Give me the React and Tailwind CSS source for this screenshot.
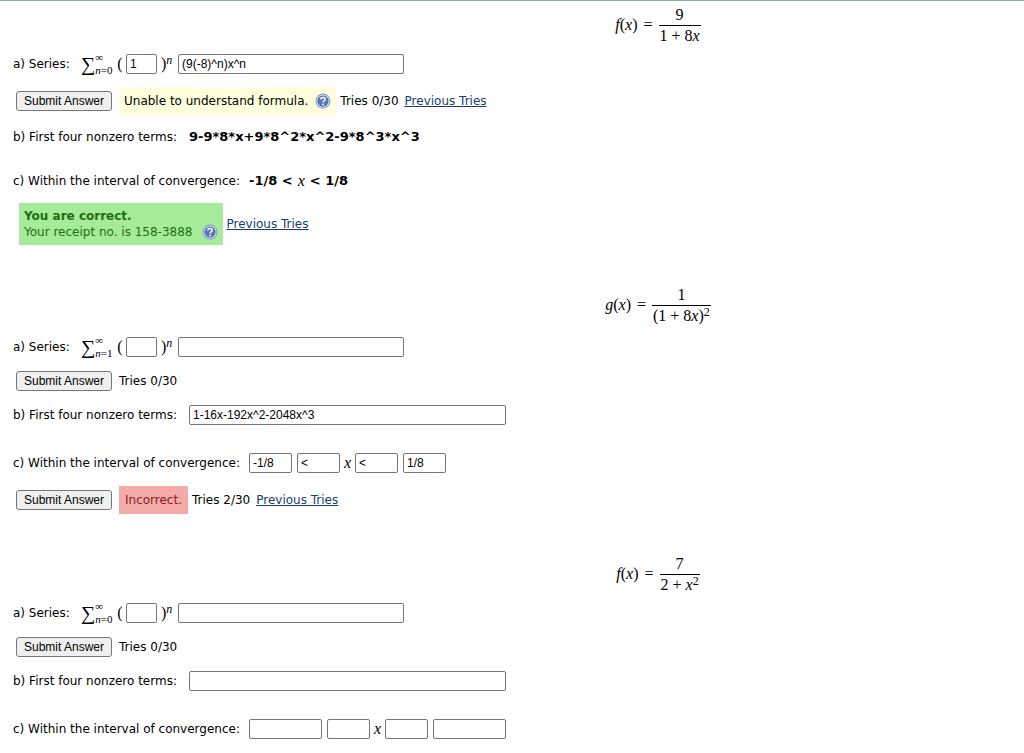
import React, { useState } from 'react';

function Field({ id, label, initial = '', width }) {
  const [value, setValue] = useState(initial);
  return (
    <input id={id} type="text" aria-label={label} value={value} onChange={(e) => setValue(e.target.value)}
      className={`${width} h-5 shrink-0 border border-[#767676] rounded-xs bg-white px-[3px] font-['Liberation_Sans',sans-serif] text-[12px] text-black`} />
  );
}

function SubmitButton() {
  return (
    <button type="button"
      className="h-5 w-24 ml-[3px] mr-[7px] shrink-0 border border-[#767676] rounded-[3px] bg-[#efefef] font-['Liberation_Sans',sans-serif] text-[12px] leading-4 text-black whitespace-nowrap">
      Submit Answer
    </button>
  );
}

function PreviousTries() {
  return <a href="#tries" className="text-[#1b3c6e] underline">Previous Tries</a>;
}

function HelpIcon() {
  return (
    <svg viewBox="0 0 16 16" className="w-4 h-4 shrink-0" role="img" aria-label="Help">
      <circle cx="8" cy="8" r="7.5" fill="#7f93bd" />
      <circle cx="8" cy="8" r="6.6" fill="#d5def0" />
      <circle cx="8" cy="8" r="5.6" fill="#5577b5" />
      <path d="M5.8 6.4C5.8 3.7 10.3 3.8 10.2 6.3C10.1 7.8 8.1 7.8 8.1 9.4" fill="none" stroke="#fff" strokeWidth="1.5" />
      <circle cx="8.1" cy="11.4" r="0.9" fill="#fff" />
    </svg>
  );
}

function X() {
  return <i className="-mx-px font-['Liberation_Serif',serif] text-[16px]">x</i>;
}

function Power({ children }) {
  return <span className="text-[12px] leading-none align-[5px]">{children}</span>;
}

function Formula({ name, top, children }) {
  return (
    <div className="h-10 pl-[292px] flex items-center justify-center gap-1.5 font-['Liberation_Serif',serif] text-[16px] leading-5">
      <span className="flex gap-1.5"><span><i>{name}</i>(<i>x</i>)</span><span>=</span></span>
      <span className="flex flex-col items-center">
        <span>{top}</span>
        <span className="border-t border-black px-px">{children}</span>
      </span>
    </div>
  );
}

function SeriesRow({ id, start, base, formula }) {
  return (
    <div className="h-5 flex items-center">
      <label htmlFor={`${id}-base`} className="w-[68px]">a) Series:</label>
      <span className="w-[45px] flex items-center font-['Liberation_Serif',serif]">
        <span className="text-[20px] leading-5">∑</span>
        <span className="w-[18px] flex flex-col text-[11px] leading-[13px]">
          <span>∞</span>
          <span><i>n</i>={start}</span>
        </span>
        <span className="text-[16px] ml-1">(</span>
      </span>
      <Field id={`${id}-base`} initial={base} width="w-[31px]" />
      <span className="w-[21px] pl-1 font-['Liberation_Serif',serif] text-[16px] leading-5">
        )<Power><i>n</i></Power>
      </span>
      <Field id={`${id}-formula`} label="Series formula" initial={formula} width="w-[226px]" />
    </div>
  );
}

function IntervalRow({ id, values = [], outer }) {
  return (
    <div className="h-5 flex items-center">
      <label htmlFor={`${id}-low`} className="w-[236px]">c) Within the interval of convergence:</label>
      <div className="flex items-center gap-[5px]">
        <Field id={`${id}-low`} initial={values[0]} width={outer} />
        <Field id={`${id}-left`} label="Left relation" initial={values[1]} width="w-[43px]" />
        <X />
        <Field id={`${id}-right`} label="Right relation" initial={values[2]} width="w-[43px]" />
        <Field id={`${id}-high`} label="Upper bound" initial={values[3]} width={outer} />
      </div>
    </div>
  );
}

function TermsRow({ id, terms }) {
  return (
    <div className="h-5 flex items-center">
      <label htmlFor={id} className="w-[176px]">b) First four nonzero terms:</label>
      <Field id={id} initial={terms} width="w-[317px]" />
    </div>
  );
}

export default function App() {
  return (
    <main className="border-t border-[#8fa5ad] bg-white px-[13px] pt-1 pb-3 font-['DejaVu_Sans',sans-serif] text-[12px] leading-4 text-black whitespace-nowrap">
      <section>
        <Formula name="f" top="9">1 + 8<i>x</i></Formula>
        <div className="mt-[9px]">
          <SeriesRow id="s1" start="0" base="1" formula="(9(-8)^n)x^n" />
        </div>
        <div className="mt-[13px] h-7 flex items-center">
          <SubmitButton />
          <span className="h-7 px-[5px] mr-1 flex items-center gap-[7px] bg-[#ffffdd]">
            Unable to understand formula. <HelpIcon />
          </span>
          <span className="mr-1.5">Tries 0/30</span>
          <PreviousTries />
        </div>
        <p className="mt-3 h-5 flex items-center">
          <span className="w-[176px]">b) First four nonzero terms:</span>
          <b className="text-[13px]">9-9*8*x+9*8^2*x^2-9*8^3*x^3</b>
        </p>
        <p className="mt-6 h-5 flex items-center gap-[6px]">
          <span className="w-[230px]">c) Within the interval of convergence:</span>
          <b className="text-[13px]">-1/8 &lt;</b> <X /> <b className="text-[13px]">&lt; 1/8</b>
        </p>
        <div className="mt-3 flex items-center">
          <div className="ml-1.5 mr-[3px] p-[5px] bg-[#a6eb99] text-[#1f6b12]">
            <b className="block">You are correct.</b>
            <span className="flex items-center gap-2.5">Your receipt no. is 158-3888 <HelpIcon /></span>
          </div>
          <PreviousTries />
        </div>
      </section>

      <section className="mt-10">
        <Formula name="g" top="1">(1 + 8<i>x</i>)<Power>2</Power></Formula>
        <div className="mt-3">
          <SeriesRow id="s2" start="1" />
        </div>
        <div className="mt-2.5 h-7 flex items-center">
          <SubmitButton />
          <span>Tries 0/30</span>
        </div>
        <div className="mt-2.5">
          <TermsRow id="t2" terms="1-16x-192x^2-2048x^3" />
        </div>
        <div className="mt-7">
          <IntervalRow id="i2" values={['-1/8', '<', '<', '1/8']} outer="w-[43px]" />
        </div>
        <div className="mt-[13px] h-7 flex items-center">
          <SubmitButton />
          <span className="h-7 px-1.5 mr-1 flex items-center bg-[#f5aaaa] text-[#8b1a1a]">Incorrect.</span>
          <span className="mr-1.5">Tries 2/30</span>
          <PreviousTries />
        </div>
      </section>

      <section className="mt-10">
        <Formula name="f" top="7">2 + <i>x</i><Power>2</Power></Formula>
        <div className="mt-[9px]">
          <SeriesRow id="s3" start="0" />
        </div>
        <div className="mt-2.5 h-7 flex items-center">
          <SubmitButton />
          <span>Tries 0/30</span>
        </div>
        <div className="mt-2.5">
          <TermsRow id="t3" />
        </div>
        <div className="mt-7">
          <IntervalRow id="i3" outer="w-[73px]" />
        </div>
      </section>
    </main>
  );
}
